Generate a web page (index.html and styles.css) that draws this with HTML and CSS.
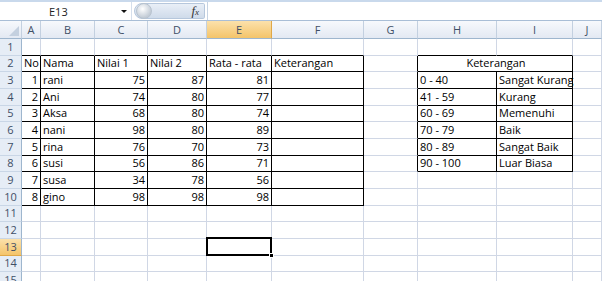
FILE: index.html
```html
<!DOCTYPE html>
<html lang="id">
<head>
    <meta charset="UTF-8">
    <meta name="viewport" content="width=device-width, initial-scale=1.0">
    <title>Nilai Siswa</title>
    <link rel="stylesheet" href="styles.css">
</head>
<body>
    <!-- Barre de formule -->
    <div class="formula-bar">
        <div class="name-box">
            <span class="name">E13</span>
            <span class="arrow"></span>
        </div>
        <div class="fx-pill">
            <span class="knob"></span>
            <span class="fx">f<small>x</small></span>
        </div>
        <div class="formula-input"></div>
    </div>

    <table class="sheet">
        <colgroup>
            <col class="c-head">
            <col class="c-a">
            <col class="c-b">
            <col class="c-c">
            <col class="c-d">
            <col class="c-e">
            <col class="c-f">
            <col class="c-g">
            <col class="c-h">
            <col class="c-i">
            <col class="c-j">
        </colgroup>
        <tr class="col-heads">
            <th class="corner"><span class="tri"></span></th>
            <th>A</th><th>B</th><th>C</th><th>D</th><th class="active">E</th><th>F</th><th>G</th><th>H</th><th>I</th><th>J</th>
        </tr>
        <tr>
            <th class="row-head">1</th>
            <td class="top"></td><td class="top"></td><td class="top"></td><td class="top"></td><td class="top"></td><td class="top"></td>
            <td></td><td class="top"></td><td class="top"></td><td></td>
        </tr>
        <tr>
            <th class="row-head">2</th>
            <td class="b">No</td><td class="b">Nama</td><td class="b">Nilai 1</td><td class="b">Nilai 2</td><td class="b">Rata - rata</td><td class="b">Keterangan</td>
            <td class="left"></td><td class="b center" colspan="2">Keterangan</td><td></td>
        </tr>
        <tr>
            <th class="row-head">3</th>
            <td class="b num">1</td><td class="b">rani</td><td class="b num">75</td><td class="b num">87</td><td class="b num">81</td><td class="b"></td>
            <td class="left"></td><td class="b">0 - 40</td><td class="b">Sangat Kurang</td><td></td>
        </tr>
        <tr>
            <th class="row-head">4</th>
            <td class="b num">2</td><td class="b">Ani</td><td class="b num">74</td><td class="b num">80</td><td class="b num">77</td><td class="b"></td>
            <td class="left"></td><td class="b">41 - 59</td><td class="b">Kurang</td><td></td>
        </tr>
        <tr>
            <th class="row-head">5</th>
            <td class="b num">3</td><td class="b">Aksa</td><td class="b num">68</td><td class="b num">80</td><td class="b num">74</td><td class="b"></td>
            <td class="left"></td><td class="b">60 - 69</td><td class="b">Memenuhi</td><td></td>
        </tr>
        <tr>
            <th class="row-head">6</th>
            <td class="b num">4</td><td class="b">nani</td><td class="b num">98</td><td class="b num">80</td><td class="b num">89</td><td class="b"></td>
            <td class="left"></td><td class="b">70 - 79</td><td class="b">Baik</td><td></td>
        </tr>
        <tr>
            <th class="row-head">7</th>
            <td class="b num">5</td><td class="b">rina</td><td class="b num">76</td><td class="b num">70</td><td class="b num">73</td><td class="b"></td>
            <td class="left"></td><td class="b">80 - 89</td><td class="b">Sangat Baik</td><td></td>
        </tr>
        <tr>
            <th class="row-head">8</th>
            <td class="b num">6</td><td class="b">susi</td><td class="b num">56</td><td class="b num">86</td><td class="b num">71</td><td class="b"></td>
            <td class="left"></td><td class="b">90 - 100</td><td class="b">Luar Biasa</td><td></td>
        </tr>
        <tr>
            <th class="row-head">9</th>
            <td class="b num">7</td><td class="b">susa</td><td class="b num">34</td><td class="b num">78</td><td class="b num">56</td><td class="b"></td>
            <td></td><td></td><td></td><td></td>
        </tr>
        <tr>
            <th class="row-head">10</th>
            <td class="b num">8</td><td class="b">gino</td><td class="b num">98</td><td class="b num">98</td><td class="b num">98</td><td class="b"></td>
            <td></td><td></td><td></td><td></td>
        </tr>
        <tr>
            <th class="row-head">11</th>
            <td></td><td></td><td></td><td></td><td></td><td></td><td></td><td></td><td></td><td></td>
        </tr>
        <tr>
            <th class="row-head">12</th>
            <td></td><td></td><td></td><td></td><td></td><td></td><td></td><td></td><td></td><td></td>
        </tr>
        <tr>
            <th class="row-head active">13</th>
            <td></td><td></td><td></td><td></td><td class="selected"><span class="cursor"><span class="handle"></span></span></td><td></td><td></td><td></td><td></td><td></td>
        </tr>
        <tr>
            <th class="row-head">14</th>
            <td></td><td></td><td></td><td></td><td></td><td></td><td></td><td></td><td></td><td></td>
        </tr>
        <tr>
            <th class="row-head">15</th>
            <td></td><td></td><td></td><td></td><td></td><td></td><td></td><td></td><td></td><td></td>
        </tr>
    </table>
</body>
</html>
```

FILE: styles.css
```css
/* Styles généraux */
body {
    margin: 0;
    font-family: "Open Sans", "Noto Sans", sans-serif;
    font-size: 11px;
    background-color: #fff;
    overflow: hidden;
}

/* Barre de formule */
.formula-bar {
    display: flex;
    height: 21px;
    box-sizing: border-box;
    border-top: 2px solid #c9d9ec;
    border-bottom: 1px solid #a9bed6;
    background-color: #fff;
}

.name-box {
    width: 131px;
    display: flex;
    align-items: center;
    position: relative;
    border-right: 1px solid #d5dfec;
}

.name-box .name {
    margin-left: 49px;
    color: #222;
}

.name-box .arrow {
    position: absolute;
    right: 4px;
    top: 8px;
    border-left: 3px solid transparent;
    border-right: 3px solid transparent;
    border-top: 3px solid #111;
}

.fx-pill {
    width: 69px;
    margin: 1px 0 1px 2px;
    display: flex;
    align-items: center;
    justify-content: space-between;
    border-radius: 9px 2px 2px 9px;
    background: linear-gradient(#e9eff7, #cfdbea);
    border: 1px solid #b6c7dc;
}

.fx-pill .knob {
    width: 14px;
    height: 14px;
    margin-left: 1px;
    border-radius: 50%;
    background: radial-gradient(circle at 40% 35%, #fff, #c3ccd6 70%);
    border: 1px solid #b8c3cf;
}

.fx-pill .fx {
    margin-right: 5px;
    font-family: "Liberation Serif", serif;
    font-style: italic;
    font-size: 13px;
    color: #333;
}

.fx-pill .fx small {
    font-size: 9px;
}

.formula-input {
    flex: 1;
    margin-left: 2px;
    border-left: 1px solid #c6d3e3;
}

/* Feuille */
.sheet {
    table-layout: fixed;
    width: 602px;
    border-collapse: separate;
    border-spacing: 0;
}

.c-head { width: 22px; }
.c-a { width: 19px; }
.c-b { width: 54px; }
.c-c { width: 53px; }
.c-d { width: 59px; }
.c-e { width: 65px; }
.c-f { width: 92px; }
.c-g { width: 54px; }
.c-h { width: 79px; }
.c-i { width: 76px; }
.c-j { width: 29px; }

.sheet th,
.sheet td {
    box-sizing: border-box;
    padding: 0 0 0 2px;
    height: 16.667px;
    line-height: 14px;
    white-space: nowrap;
    overflow: visible;
    text-align: left;
    font-weight: normal;
    color: #000;
    border-right: 1px solid #d0d7e5;
    border-bottom: 1px solid #d0d7e5;
}

.col-heads th {
    height: 18px;
    padding: 0;
    text-align: center;
    color: #3f4f66;
    background: linear-gradient(#f7f9fc, #e3e9f3);
    border-right: 1px solid #c3d0e0;
    border-bottom: 1px solid #9eb6ce;
}

.col-heads th.active {
    background: linear-gradient(#fbe1ab, #f4c46a);
    border-right-color: #e0a848;
}

.corner {
    position: relative;
}

.corner .tri {
    position: absolute;
    right: 2px;
    bottom: 2px;
    border-left: 10px solid transparent;
    border-bottom: 10px solid #c4d0df;
}

.sheet .row-head {
    padding: 0;
    text-align: center;
    color: #3f4f66;
    background-color: #e6edf6;
    border-right: 1px solid #9eb6ce;
    border-bottom: 1px solid #c9d6e6;
}

.sheet .row-head.active {
    background: linear-gradient(#fbe1ab, #f4c46a);
    border-bottom-color: #e0a848;
}

/* Bordures des tableaux */
.sheet td.b {
    border-right-color: #000;
    border-bottom-color: #000;
}

.sheet td.top {
    border-bottom-color: #000;
}

.sheet td.left {
    border-right-color: #000;
}

.sheet td.num {
    text-align: right;
    padding: 0 2px 0 0;
}

.sheet td.center {
    text-align: center;
}

/* Cellule active */
.sheet td.selected {
    position: relative;
}

.cursor {
    position: absolute;
    left: -1px;
    top: -2px;
    right: -1px;
    bottom: -1px;
    border: 2px solid #000;
}

.handle {
    position: absolute;
    right: -4px;
    bottom: -4px;
    width: 5px;
    height: 5px;
    background-color: #000;
    border: 1px solid #fff;
    box-sizing: border-box;
}
```
